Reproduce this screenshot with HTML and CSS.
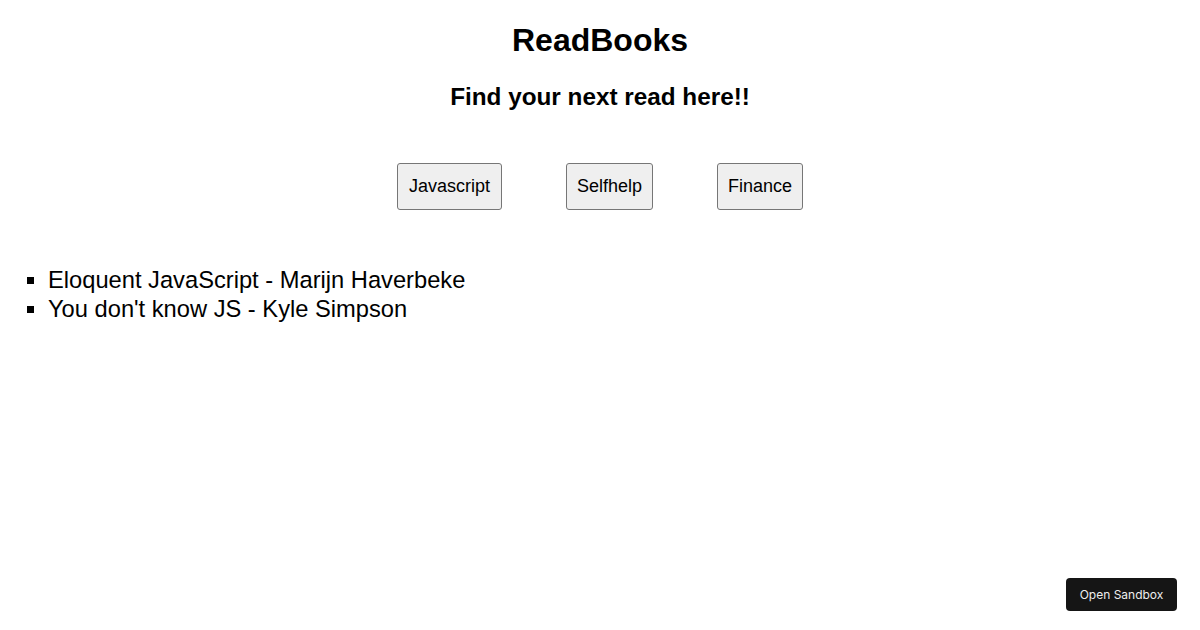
FILE: index.html
```html
<!DOCTYPE html>
<html>
<head>
<meta charset="utf-8">
<link rel="stylesheet" href="styles.css">
</head>
<body>
<div class="app">
  <h1 class="title">ReadBooks</h1>
  <h2 class="subtitle">Find your next read here!!</h2>
  <div class="genres"><button class="genre">Javascript</button><button class="genre">Selfhelp</button><button class="genre">Finance</button></div>
  <ul class="books">
    <li class="book">Eloquent JavaScript - Marijn Haverbeke</li>
    <li class="book">You don't know JS - Kyle Simpson</li>
  </ul>
</div>
<a class="sandbox-btn">Open Sandbox</a>
</body>
</html>
```

FILE: styles.css
```css
html, body {
  background: #fff;
}
body {
  margin: 8px;
  font-family: "Liberation Sans", Arial, sans-serif;
  color: #000;
}
.app {
  text-align: center;
}
.title {
  font-size: 32px;
  font-weight: bold;
  margin: 14px 0 0;
  line-height: 37px;
}
.subtitle {
  font-size: 24.3px;
  font-weight: bold;
  margin: 24px 0 0;
  line-height: 28px;
}
.genres {
  margin-top: 20px;
}
.genre {
  font-family: "Liberation Sans", Arial, sans-serif;
  font-size: 18px;
  line-height: 21px;
  color: #000;
  background: #efefef;
  border: 1px solid #767676;
  border-radius: 3px;
  padding: 12px 10px;
  margin: 32px 32px;
  vertical-align: top;
}
.genre:first-child {
  padding: 12px 11px;
}
.books {
  text-align: left;
  font-size: 23.7px;
  line-height: 29px;
  margin: 24px 0;
  padding-left: 40px;
  list-style: square;
}
.sandbox-btn {
  position: fixed;
  right: 23px;
  bottom: 19px;
  width: 111px;
  height: 33px;
  box-sizing: border-box;
  display: flex;
  align-items: center;
  justify-content: center;
  background: #151515;
  color: #eeeeee;
  border-radius: 4px;
  font-family: Inter, "Liberation Sans", sans-serif;
  font-size: 12px;
  text-decoration: none;
}
```
